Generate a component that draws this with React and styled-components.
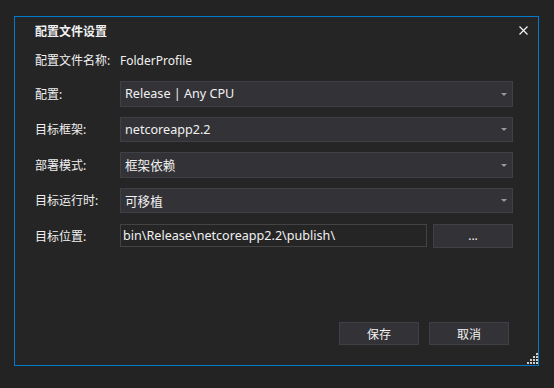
import styled, { createGlobalStyle } from "styled-components";

const Global = createGlobalStyle`
  html, body {
    margin: 0;
    padding: 0;
    background: #232323;
  }
  body {
    font-family: "Noto Sans", "Noto Sans CJK SC", sans-serif;
    font-size: 12px;
    color: #f1f1f1;
  }
`;

const Page = styled.div`
  width: 554px;
  height: 388px;
  padding: 16px 0 0 14px;
  box-sizing: border-box;
`;

const Dialog = styled.div`
  position: relative;
  width: 525px;
  height: 350px;
  box-sizing: border-box;
  border: 1px solid #007acc;
  background: #252526;
  display: flex;
  flex-direction: column;
`;

const Header = styled.div`
  height: 27px;
  display: flex;
  align-items: center;
  justify-content: space-between;
  padding: 0 7px 0 20px;
`;

const Title = styled.span`
  font-weight: bold;
  font-size: 12px;
`;

const Close = styled.button`
  width: 16px;
  height: 16px;
  padding: 0;
  border: none;
  background: none;
  display: flex;
  align-items: center;
  justify-content: center;
`;

const Form = styled.div`
  display: grid;
  grid-template-columns: 85px 393px;
  row-gap: 10px;
  padding: 5px 0 0 20px;
  align-items: center;
`;

const Label = styled.span`
  height: ${(p) => p.h || 25}px;
  display: flex;
  align-items: center;
  font-size: 12px;
`;

const Value = styled.span`
  height: 22px;
  display: flex;
  align-items: center;
`;

const Combo = styled.div`
  height: 25.5px;
  box-sizing: border-box;
  border: 1px solid #3f3f46;
  background: #333337;
  display: flex;
  align-items: center;
  justify-content: space-between;
  padding: 0 5px 0 4px;
  font-size: 12.6px;
`;

const Arrow = styled.span`
  width: 0;
  height: 0;
  border-left: 3px solid transparent;
  border-right: 3px solid transparent;
  border-top: 3px solid #999999;
  margin-top: 1px;
`;

const PathRow = styled.div`
  display: flex;
  gap: 6px;
  align-items: center;
`;

const TextBox = styled.div`
  width: 307px;
  height: 23px;
  box-sizing: border-box;
  border: 1px solid #434346;
  background: #252526;
  display: flex;
  align-items: center;
  padding: 0 2px;
  font-size: 12.6px;
`;

const Button = styled.button`
  width: ${(p) => p.w || 80}px;
  height: ${(p) => p.h || 23}px;
  box-sizing: border-box;
  border: 1px solid #3f3f46;
  background: #333337;
  color: #f1f1f1;
  font-family: inherit;
  font-size: 12px;
  padding: 0;
  display: flex;
  align-items: center;
  justify-content: center;
`;

const Footer = styled.div`
  margin-top: auto;
  display: flex;
  justify-content: flex-end;
  gap: 10px;
  padding: 0 29px 20px 0;
`;

const Grip = styled.svg`
  position: absolute;
  right: 0;
  bottom: 1px;
`;

const rows = [
  ["配置:", "Release | Any CPU"],
  ["目标框架:", "netcoreapp2.2"],
  ["部署模式:", "框架依赖"],
  ["目标运行时:", "可移植"],
];

function GripIcon() {
  const dots = [];
  for (let r = 0; r < 4; r++) {
    for (let c = 3 - r; c < 4; c++) {
      dots.push(<rect key={r + "-" + c} x={c * 3} y={r * 3} width="2" height="2" fill="#d0d0d0" />);
    }
  }
  return (
    <Grip width="11" height="11" viewBox="0 0 11 11">
      {dots}
    </Grip>
  );
}

export default function App() {
  return (
    <Page>
      <Global />
      <Dialog>
        <Header>
          <Title>配置文件设置</Title>
          <Close>
            <svg width="9" height="9" viewBox="0 0 9 9">
              <path d="M0.5 0.5 L8.5 8.5 M8.5 0.5 L0.5 8.5" stroke="#f1f1f1" strokeWidth="1.2" />
            </svg>
          </Close>
        </Header>
        <Form>
          <Label h={22}>配置文件名称:</Label>
          <Value>FolderProfile</Value>
          {rows.map(([l, v]) => [
            <Label key={l} h={25.5}>{l}</Label>,
            <Combo key={l + "c"}>
              <span>{v}</span>
              <Arrow />
            </Combo>,
          ])}
          <Label>目标位置:</Label>
          <PathRow>
            <TextBox>bin\Release\netcoreapp2.2\publish\</TextBox>
            <Button w={80} h={24}>...</Button>
          </PathRow>
        </Form>
        <Footer>
          <Button>保存</Button>
          <Button>取消</Button>
        </Footer>
        <GripIcon />
      </Dialog>
    </Page>
  );
}
